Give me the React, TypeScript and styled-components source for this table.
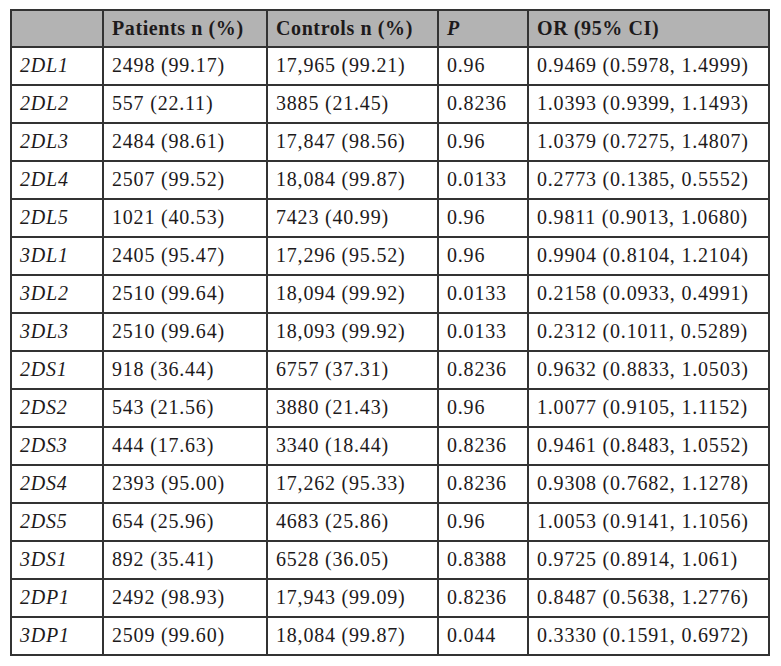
import React from 'react';
import styled, {createGlobalStyle} from 'styled-components';

const GlobalStyle = createGlobalStyle`
  body {
    margin: 0;
    background: #ffffff;
  }
`;

const Page = styled.div`
  padding: 9px 0 0 10px;
  font-family: "Liberation Serif", "Times New Roman", serif;
  color: #1d1a1b;
`;

const Table = styled.table`
  border-collapse: collapse;
  table-layout: fixed;
  width: 758px;
  border: 2px solid #333;
`;

const Column = styled.col`
  width: ${({size}: {size: number}) => size}px;
`;

const HeadCell = styled.th`
  background: #b3b3b3;
  border: 2px solid #333;
  height: 35px;
  padding: 0 8px;
  text-align: left;
  font-size: 20px;
  font-weight: bold;
  letter-spacing: 0.6px;
  ${({italic}: {italic?: boolean}) => italic ? 'font-style: italic;' : ''}
`;

const Cell = styled.td`
  border: 2px solid #333;
  height: 35px;
  padding: 0 8px 1px;
  font-size: 20px;
  letter-spacing: 0.8px;
  white-space: nowrap;
  ${({italic}: {italic?: boolean}) => italic ? 'font-style: italic;' : ''}
`;

const widths = [92, 164, 171, 90, 241];

const rows: string[][] = [
  ['2DL1', '2498 (99.17)', '17,965 (99.21)', '0.96', '0.9469 (0.5978, 1.4999)'],
  ['2DL2', '557 (22.11)', '3885 (21.45)', '0.8236', '1.0393 (0.9399, 1.1493)'],
  ['2DL3', '2484 (98.61)', '17,847 (98.56)', '0.96', '1.0379 (0.7275, 1.4807)'],
  ['2DL4', '2507 (99.52)', '18,084 (99.87)', '0.0133', '0.2773 (0.1385, 0.5552)'],
  ['2DL5', '1021 (40.53)', '7423 (40.99)', '0.96', '0.9811 (0.9013, 1.0680)'],
  ['3DL1', '2405 (95.47)', '17,296 (95.52)', '0.96', '0.9904 (0.8104, 1.2104)'],
  ['3DL2', '2510 (99.64)', '18,094 (99.92)', '0.0133', '0.2158 (0.0933, 0.4991)'],
  ['3DL3', '2510 (99.64)', '18,093 (99.92)', '0.0133', '0.2312 (0.1011, 0.5289)'],
  ['2DS1', '918 (36.44)', '6757 (37.31)', '0.8236', '0.9632 (0.8833, 1.0503)'],
  ['2DS2', '543 (21.56)', '3880 (21.43)', '0.96', '1.0077 (0.9105, 1.1152)'],
  ['2DS3', '444 (17.63)', '3340 (18.44)', '0.8236', '0.9461 (0.8483, 1.0552)'],
  ['2DS4', '2393 (95.00)', '17,262 (95.33)', '0.8236', '0.9308 (0.7682, 1.1278)'],
  ['2DS5', '654 (25.96)', '4683 (25.86)', '0.96', '1.0053 (0.9141, 1.1056)'],
  ['3DS1', '892 (35.41)', '6528 (36.05)', '0.8388', '0.9725 (0.8914, 1.061)'],
  ['2DP1', '2492 (98.93)', '17,943 (99.09)', '0.8236', '0.8487 (0.5638, 1.2776)'],
  ['3DP1', '2509 (99.60)', '18,084 (99.87)', '0.044', '0.3330 (0.1591, 0.6972)'],
];

export default function App() {
  return (
    <Page>
      <GlobalStyle />
      <Table>
        <colgroup>
          {widths.map((w, i) => <Column key={i} size={w} />)}
        </colgroup>
        <thead>
          <tr>
            <HeadCell />
            <HeadCell>Patients n (%)</HeadCell>
            <HeadCell>Controls n (%)</HeadCell>
            <HeadCell italic>P</HeadCell>
            <HeadCell>OR (95% CI)</HeadCell>
          </tr>
        </thead>
        <tbody>
          {rows.map(row =>
            <tr key={row[0]}>
              {row.map((value, index) =>
                <Cell key={index} italic={index === 0}>{value}</Cell>
              )}
            </tr>
          )}
        </tbody>
      </Table>
    </Page>
  );
}
